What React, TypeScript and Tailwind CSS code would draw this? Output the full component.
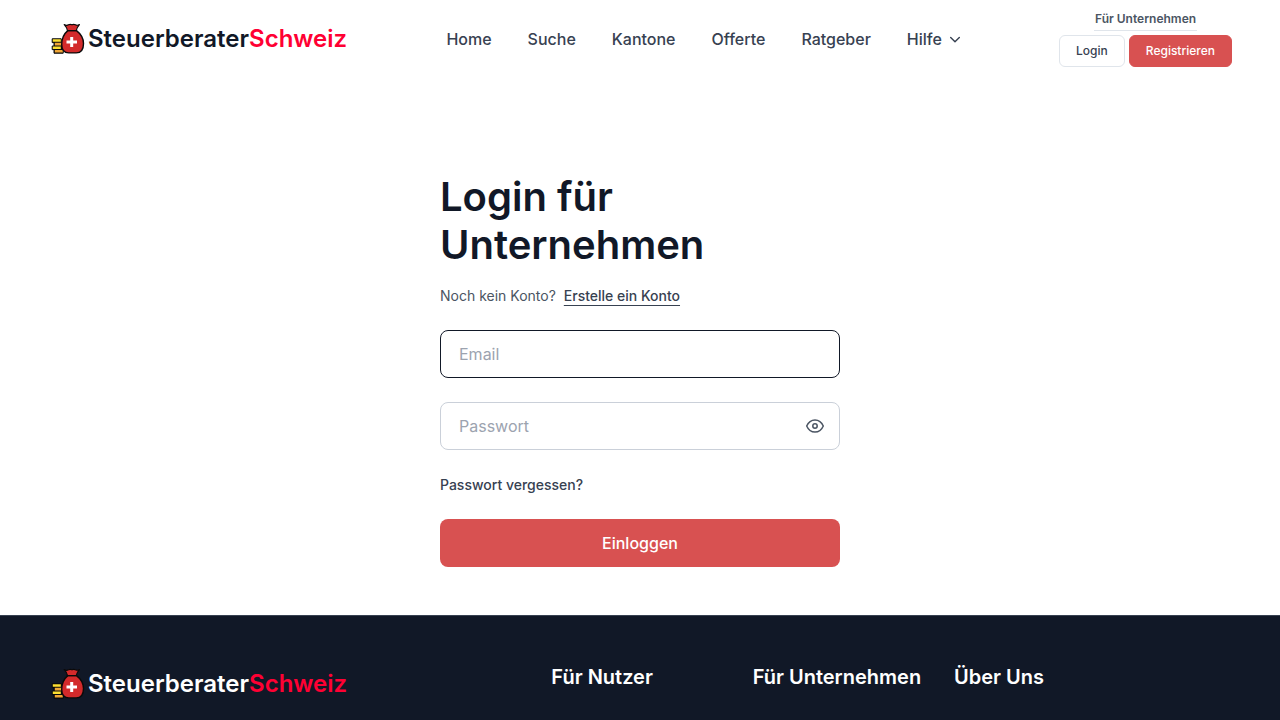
import React, { useState } from "react";

interface NavItem {
  label: string;
  href: string;
}

const navItems: NavItem[] = [
  { label: "Home", href: "#home" },
  { label: "Suche", href: "#suche" },
  { label: "Kantone", href: "#kantone" },
  { label: "Offerte", href: "#offerte" },
  { label: "Ratgeber", href: "#ratgeber" },
];

const footerColumns = ["Für Nutzer", "Für Unternehmen", "Über Uns"];

const MoneyBag: React.FC = () => (
  <svg viewBox="0 0 40 40" className="size-10 shrink-0" aria-hidden="true">
    {/* coins */}
    <path
      d="M4.200 19.800h9v3.600h2v10.800H6v-3.600H4.200v-3.600H6v-3.400H4.200z"
      fill="#0a0a0a"
      stroke="#0a0a0a"
      strokeWidth="1"
      strokeLinejoin="round"
    />
    <path d="M4.800 20.200h8v2.600h-8zM4.800 27.400h8V30h-8z" fill="#fde031" />
    <path d="M6.800 23.800h7.500v2.600H6.800zM6.800 31h8v2.600h-8z" fill="#efa636" />
    {/* bag */}
    <path
      d="M19.800 11.600h8.700c3.800 2.900 7 7.900 7 12.900 0 6.200-2.900 9.400-7.300 9.400h-7.400c-4.500 0-7.100-3.200-7.100-8.400 0-5.700 2.500-10.900 6.100-13.900z"
      fill="#d32a2b"
      stroke="#0a0a0a"
      strokeWidth="1.400"
    />
    <path
      d="M16.200 5.600c1.500.8 3 .9 4.300.2 1.200-.6 2.300-.6 3.500 0 1.100-.6 2.200-.6 3.400 0 1.300.7 2.600.6 4-.2-1.600 1.800-2.700 3.800-3.200 6h-8.700c-.4-2.200-1.500-4.200-3.300-6z"
      fill="#d32a2b"
      stroke="#0a0a0a"
      strokeWidth="1.200"
      strokeLinejoin="round"
    />
    <path d="M22.200 18h3v3.500H29v3h-3.800V28h-3v-3.500h-3.700v-3h3.700z" fill="#fff" />
  </svg>
);

const Logo: React.FC<{ className: string }> = ({ className }) => (
  <a href="#home" className={`flex items-center text-2xl font-semibold ${className}`}>
    <MoneyBag />
    <span>
      Steuerberater<span className="text-[#ff0033]">Schweiz</span>
    </span>
  </a>
);

const Header: React.FC = () => (
  <header className="flex items-center justify-between px-12 py-[11px]">
    <Logo className="text-[#111827]" />

    <nav className="flex items-center gap-9 font-medium text-[#374151]">
      {navItems.map((item) => (
        <a key={item.label} href={item.href}>
          {item.label}
        </a>
      ))}
      <button type="button" className="flex items-center gap-2">
        Hilfe
        <svg viewBox="0 0 10 8" className="h-2 w-[10px]" aria-hidden="true">
          <path
            d="M.7 2.500 5 6.800 9.300 2.500"
            fill="none"
            stroke="currentColor"
            strokeWidth="1.400"
            strokeLinecap="round"
            strokeLinejoin="round"
          />
        </svg>
      </button>
    </nav>

    <div className="flex flex-col items-center gap-1 text-xs">
      <a
        href="#unternehmen"
        className="border-b border-[#e0e5eb] px-px pb-[3px] font-semibold text-[#4b5563]"
      >
        Für Unternehmen
      </a>
      <div className="flex gap-1 font-medium">
        <button
          type="button"
          className="h-8 rounded-md border border-[#e0e5eb] px-4 text-[#374151]"
        >
          Login
        </button>
        <button
          type="button"
          className="h-8 rounded-md border border-[#d85151] bg-[#d85151] px-4 text-white"
        >
          Registrieren
        </button>
      </div>
    </div>
  </header>
);

const LoginForm: React.FC = () => {
  const [visible, setVisible] = useState(false);

  return (
    <main className="px-4 pt-[95px] pb-12">
      <form
        className="mx-auto flex max-w-[400px] flex-col"
        onSubmit={(e) => e.preventDefault()}
      >
        <h1 className="text-[40px] leading-[48px] font-semibold text-[#111827]">
          Login für Unternehmen
        </h1>
        <p className="mt-4 flex gap-2 text-sm leading-[21px] text-[#4b5563]">
          Noch kein Konto?
          <a
            href="#konto"
            className="font-medium text-[#374151] underline underline-offset-4"
          >
            Erstelle ein Konto
          </a>
        </p>
        <input
          type="email"
          aria-label="Email"
          placeholder="Email"
          className="mt-6 h-12 rounded-lg border border-[#111827] px-[18px] text-[#374151] outline-none placeholder:text-[#9ca3af]"
        />
        <div className="mt-6 flex h-12 items-center rounded-lg border border-[#cad0d9] pr-[14px] pl-[18px]">
          <input
            type={visible ? "text" : "password"}
            aria-label="Passwort"
            placeholder="Passwort"
            className="min-w-0 flex-1 text-[#374151] outline-none placeholder:text-[#9ca3af]"
          />
          <button
            type="button"
            aria-label="Passwort anzeigen"
            onClick={() => setVisible(!visible)}
            className="text-[#4b5563]"
          >
            <svg viewBox="0 0 20 20" className="size-5" fill="none" stroke="currentColor">
              <path
                d="M1.700 10C3.300 6.300 6.400 3.900 10 3.900s6.700 2.400 8.300 6.100c-1.600 3.700-4.700 6.100-8.300 6.100S3.300 13.700 1.700 10z"
                strokeWidth="1.500"
                strokeLinejoin="round"
              />
              <circle cx="10" cy="10" r="2.200" strokeWidth="1.500" />
            </svg>
          </button>
        </div>
        <a
          href="#passwort"
          className="mt-6 self-start text-sm leading-[21px] font-medium text-[#374151]"
        >
          Passwort vergessen?
        </a>
        <button
          type="submit"
          className="mt-6 h-12 rounded-lg bg-[#d85151] font-medium text-white"
        >
          Einloggen
        </button>
      </form>
    </main>
  );
};

const Footer: React.FC = () => (
  <footer className="flex-1 border-t border-[#374151] bg-[#111827] px-12 pt-12 text-white">
    <div className="grid grid-cols-12 gap-6">
      <div className="col-span-5">
        <Logo className="text-white" />
      </div>
      {footerColumns.map((title) => (
        <h2
          key={title}
          className="col-span-2 text-xl leading-[26px] font-semibold whitespace-nowrap"
        >
          {title}
        </h2>
      ))}
    </div>
  </footer>
);

const App: React.FC = () => {
  return (
    <div className="flex min-h-screen flex-col bg-white font-['Inter',sans-serif]">
      <Header />
      <LoginForm />
      <Footer />
    </div>
  );
};

export default App;
